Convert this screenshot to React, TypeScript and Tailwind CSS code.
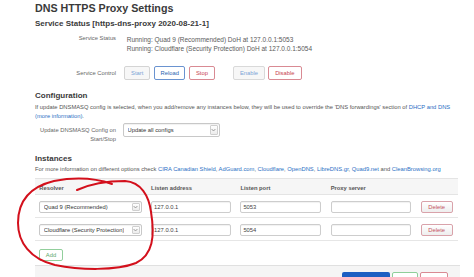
const FONT = "font-['Liberation_Sans',Arial,sans-serif]";

function Chevron() {
  return (
    <svg width="5" height="4" viewBox="0 0 5 4" className="shrink-0">
      <polyline points="0.6,1 2.5,3 4.4,1" fill="none" stroke="#888" strokeWidth="0.8" />
    </svg>
  );
}

function Select({ label, width, height }: { label: string; width: string; height: string }) {
  return (
    <div
      className={`flex items-center justify-between rounded-[2px] border border-[#c8c8c8] bg-white pl-[3.5px] pr-[1px] text-[#333] shadow-[inset_0_1px_1px_rgba(0,0,0,0.06)] ${width} ${height}`}
    >
      <span className="truncate">{label}</span>
      <div className="flex h-[calc(100%-2px)] w-[8px] items-center justify-center rounded-[1px] border border-[#cfcfcf] bg-gradient-to-b from-white to-[#ececec]">
        <Chevron />
      </div>
    </div>
  );
}

function Input({ value }: { value?: string }) {
  return (
    <div className="flex h-[12.3px] items-center rounded-[2px] border border-[#cdcdcd] bg-white pl-[2px] text-[#444] shadow-[inset_0_1px_1px_rgba(0,0,0,0.06)]">
      {value}
    </div>
  );
}

const GRID = "grid grid-cols-[102.5px_80px_81px_80.7px_32px] gap-x-[9.3px] pl-[4.3px]";

function Row({ resolver, port }: { resolver: string; port: string }) {
  return (
    <div className={`${GRID} h-[23px] border-b border-[#e6e6e6] pt-[6px]`}>
      <Select label={resolver} width="w-[102.5px]" height="h-[12.3px]" />
      <Input value="127.0.0.1" />
      <Input value={port} />
      <Input />
      <button className="flex h-[12.3px] items-center justify-center rounded-[2px] border border-[#d9a2aa] bg-gradient-to-b from-white to-[#eeeeee] text-[#c45262]">
        Delete
      </button>
    </div>
  );
}

export default function App() {
  return (
    <div className={`relative h-[277px] w-[474px] overflow-hidden bg-white text-[#555] ${FONT}`}>
      <div className="pl-[35px] pr-[16px]">
        <h2 className="pt-[2px] text-[10.7px] font-bold leading-[12px] text-[#3a3a3a]">DNS HTTPS Proxy Settings</h2>
        <h3 className="mt-[4.7px] text-[8px] font-bold leading-[10px] text-[#3a3a3a]">
          Service Status [https-dns-proxy 2020-08-21-1]
        </h3>

        <div className="mt-[5.3px] flex text-[5.8px] leading-[8.7px]">
          <div className="w-[81px] shrink-0 text-right text-[#666]">Service Status</div>
          <div className="ml-[10.7px] pt-[2.4px] text-[6.5px] text-[#5a5a5a]">
            <div>Running: Quad 9 (Recommended) DoH at 127.0.0.1:5053</div>
            <div>Running: Cloudflare (Security Protection) DoH at 127.0.0.1:5054</div>
          </div>
        </div>

        <div className="mt-[12.2px] flex h-[14px] items-center text-[5.8px]">
          <div className="w-[81px] shrink-0 text-right text-[#666]">Service Control</div>
          <button className="ml-[8.3px] flex h-[14px] w-[25.7px] items-center justify-center rounded-[2px] border border-[#d4d4d4] bg-[#f7f7f7] text-[#7aa3d6]">
            Start
          </button>
          <button className="ml-[4.3px] flex h-[14px] w-[31px] items-center justify-center rounded-[2px] border border-[#6a93d0] bg-white text-[#2b62b0]">
            Reload
          </button>
          <button className="ml-[3.7px] flex h-[14px] w-[26px] items-center justify-center rounded-[2px] border border-[#d98a93] bg-white text-[#c8414f]">
            Stop
          </button>
          <button className="ml-[18px] flex h-[14px] w-[32px] items-center justify-center rounded-[2px] border border-[#d9d9d9] bg-[#f7f7f7] text-[#7aa3d6]">
            Enable
          </button>
          <button className="ml-[3px] flex h-[14px] w-[33.7px] items-center justify-center rounded-[2px] border border-[#d98a93] bg-white text-[#c8414f]">
            Disable
          </button>
        </div>

        <h3 className="mt-[10.8px] text-[8px] font-bold leading-[10px] text-[#3a3a3a]">Configuration</h3>
        <div className="mt-[2.7px] text-[5.8px] leading-[9px]">
          <div className="whitespace-nowrap">
            If update DNSMASQ config is selected, when you add/remove any instances below, they will be used to override
            the 'DNS forwardings' section of <span className="text-[#2a6fc4]">DHCP and DNS</span>
          </div>
          <div>
            <span className="text-[#2a6fc4]">(more information)</span>.
          </div>
        </div>

        <div className="mt-[1.5px] flex text-[5.8px]">
          <div className="w-[81px] shrink-0 pt-[3.5px] text-right leading-[8.5px] text-[#666]">
            Update DNSMASQ Config on
            <br />
            Start/Stop
          </div>
          <div className="ml-[7px]">
            <Select label="Update all configs" width="w-[96.5px]" height="h-[14px]" />
          </div>
        </div>

        <h3 className="mt-[10.5px] text-[8px] font-bold leading-[10px] text-[#3a3a3a]">Instances</h3>
        <div className="mt-[1.5px] whitespace-nowrap text-[5.8px] leading-[9px]">
          For more information on different options check{" "}
          <span className="text-[#2a6fc4]">CIRA Canadian Shield</span>,{" "}
          <span className="text-[#2a6fc4]">AdGuard.com</span>, <span className="text-[#2a6fc4]">Cloudflare</span>,{" "}
          <span className="text-[#2a6fc4]">OpenDNS</span>, <span className="text-[#2a6fc4]">LibreDNS.gr</span>,{" "}
          <span className="text-[#2a6fc4]">Quad9.net</span> and{" "}
          <span className="text-[#2a6fc4]">CleanBrowsing.org</span>
        </div>

        <div className="mt-[3.8px] w-[423px] text-[5.8px]">
          <div
            className={`${GRID} h-[16.7px] border-t border-b border-[#e4e4e4] bg-[#f6f6f6] pt-[4.7px] font-bold leading-[8px] text-[#555]`}
          >
            <div>Resolver</div>
            <div>Listen address</div>
            <div>Listen port</div>
            <div>Proxy server</div>
            <div />
          </div>
          <Row resolver="Quad 9 (Recommended)" port="5053" />
          <Row resolver="Cloudflare (Security Protection)" port="5054" />
          <div className="pl-[4.3px] pt-[8px]">
            <button className="flex h-[12px] w-[23.4px] items-center justify-center rounded-[2px] border border-[#92cf9c] bg-white text-[#5aa86a]">
              Add
            </button>
          </div>
        </div>

        <div className="mt-[4px] flex h-[20px] w-[425px] justify-end border-t-[1.5px] border-[#e0e0e0] bg-[#f5f5f5] pr-[11.7px] pt-[6.5px]">
          <div className="h-[14px] w-[48.3px] rounded-[2px] bg-[#1d5fc2]" />
          <div className="ml-[2.3px] h-[14px] w-[25.4px] rounded-[2px] border border-[#8fcf9a] bg-white" />
          <div className="ml-[2.3px] h-[14px] w-[28.3px] rounded-[2px] border border-[#d98a93] bg-white" />
        </div>
      </div>

      <svg className="pointer-events-none absolute inset-0" width="474" height="277" viewBox="0 0 474 277">
        <path
          d="M 77 190 C 90 184, 105 181, 125 181 C 141 182, 149 196, 151 212 C 155 236, 153 255, 136 263 C 116 271, 80 270, 55 265 C 30 259, 18 242, 18 223 C 18 202, 29 187, 54 181 C 75 177, 95 178, 112 184"
          fill="none"
          stroke="#d3101c"
          strokeWidth="2"
          strokeLinecap="round"
        />
      </svg>
    </div>
  );
}
